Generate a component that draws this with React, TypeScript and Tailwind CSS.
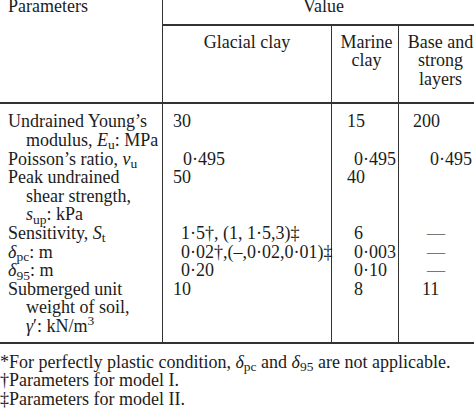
import React from 'react';

type Row = {
    param: React.ReactNode[];
    glacial: string;
    gPad: string;
    marine: string;
    mPad: string;
    base: string;
    bPad: string;
};

const rows: Row[] = [
    {
        param: [<>Undrained Young’s</>, <>modulus, <i>E</i><sub>u</sub>: MPa</>],
        glacial: '30', gPad: 'pl-[10px]',
        marine: '15', mPad: 'pl-[15px]',
        base: '200', bPad: 'pl-[14px]',
    },
    {
        param: [<>Poisson’s ratio, <i>ν</i><sub>u</sub></>],
        glacial: '0·495', gPad: 'pl-[20px]',
        marine: '0·495', mPad: 'pl-[22px]',
        base: '0·495', bPad: 'pl-[31px]',
    },
    {
        param: [<>Peak undrained</>, <>shear strength,</>, <><i>s</i><sub>up</sub>: kPa</>],
        glacial: '50', gPad: 'pl-[10px]',
        marine: '40', mPad: 'pl-[15px]',
        base: '', bPad: 'pl-[14px]',
    },
    {
        param: [<>Sensitivity, <i>S</i><sub>t</sub></>],
        glacial: '1·5†, (1, 1·5,3)‡', gPad: 'pl-[18px]',
        marine: '6', mPad: 'pl-[22px]',
        base: '—', bPad: 'pl-[28px]',
    },
    {
        param: [<><i>δ</i><sub>pc</sub>: m</>],
        glacial: '0·02†,(–,0·02,0·01)‡', gPad: 'pl-[18px]',
        marine: '0·003', mPad: 'pl-[22px]',
        base: '—', bPad: 'pl-[28px]',
    },
    {
        param: [<><i>δ</i><sub>95</sub>: m</>],
        glacial: '0·20', gPad: 'pl-[18px]',
        marine: '0·10', mPad: 'pl-[22px]',
        base: '—', bPad: 'pl-[28px]',
    },
    {
        param: [<>Submerged unit</>, <>weight of soil,</>, <><i>γ</i>′: kN/m<sup>3</sup></>],
        glacial: '10', gPad: 'pl-[10px]',
        marine: '8', mPad: 'pl-[22px]',
        base: '11', bPad: 'pl-[23px]',
    },
];

export default function App() {
    return (
        <div className="w-[474px] h-[412px] overflow-hidden bg-white text-[#1c1c1c] font-['Liberation_Serif',serif] text-[18px] leading-[18.6px]">
            <div className="w-[484px] -mt-[3px]">
                {/* Header */}
                <div className="grid grid-cols-[163px_169px_67px_85px]">
                    <div className="row-span-2 border-r-[1.5px] border-[#333] pl-[8px]">Parameters</div>
                    <div className="col-span-3 text-center border-b-2 border-[#333] pb-[8px]">Value</div>
                    <div className="border-r-[1.5px] border-[#333] text-center pt-[7px]">Glacial clay</div>
                    <div className="border-r-[1.5px] border-[#333] text-center pt-[7px] pl-[3px]">
                        Marine<br />clay
                    </div>
                    <div className="text-center pt-[7px] pb-[14px] pr-[2px]">
                        Base and<br />strong<br />layers
                    </div>
                </div>

                {/* Body */}
                <div className="grid grid-cols-[163px_169px_67px_85px] border-y-2 border-[#333]">
                    {rows.map((r, i) => {
                        const edge = i === 0 ? 'pt-[8px]' : i === rows.length - 1 ? 'pb-[6px]' : '';
                        return (
                            <React.Fragment key={i}>
                                <div className={`border-r-[1.5px] border-[#333] pl-[8px] ${edge}`}>
                                    {r.param.map((line, j) => (
                                        <div key={j} className={j > 0 ? 'pl-[18px]' : ''}>{line}</div>
                                    ))}
                                </div>
                                <div className={`border-r-[1.5px] border-[#333] whitespace-nowrap ${r.gPad} ${edge}`}>{r.glacial}</div>
                                <div className={`border-r-[1.5px] border-[#333] whitespace-nowrap ${r.mPad} ${edge}`}>{r.marine}</div>
                                <div className={`whitespace-nowrap ${r.bPad} ${edge} ${r.base === '—' ? 'text-[#777]' : ''}`}>{r.base}</div>
                            </React.Fragment>
                        );
                    })}
                </div>

                {/* Footnotes */}
                <div className="pt-[9px] leading-[18.5px]">
                    <div>*For perfectly plastic condition, <i>δ</i><sub>pc</sub> and <i>δ</i><sub>95</sub> are not applicable.</div>
                    <div>†Parameters for model I.</div>
                    <div>‡Parameters for model II.</div>
                </div>
            </div>
        </div>
    );
}
